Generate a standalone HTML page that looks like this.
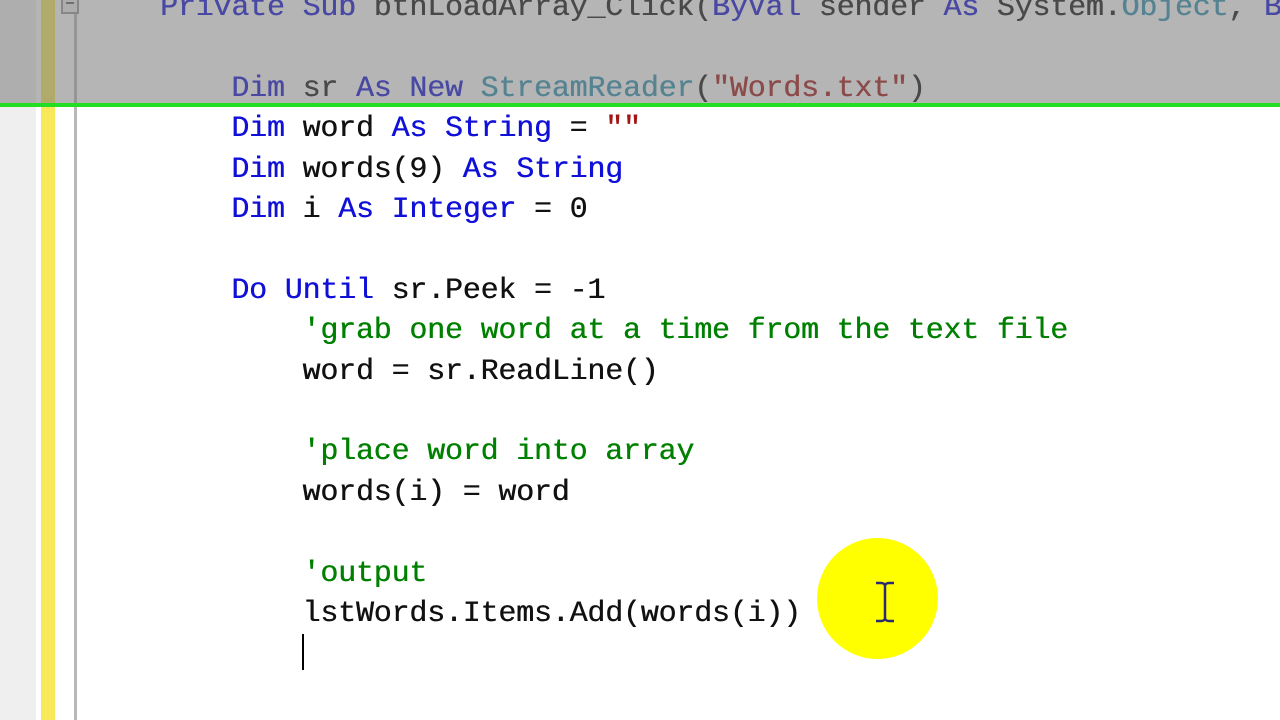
<!DOCTYPE html>
<html><head><style>
html,body{margin:0;padding:0;width:1280px;height:720px;overflow:hidden;background:#fff;position:relative;}
.m{position:absolute;left:0;top:0;width:36px;height:720px;background:#efefef;}
.y{position:absolute;left:41px;top:0;width:14px;height:720px;background:#f7e95a;}
.v{position:absolute;left:74px;top:0;width:3px;height:720px;background:#b8b8b8;}
.box{position:absolute;left:61px;top:-6px;width:18px;height:20px;border:2px solid #999;background:#eee;box-sizing:border-box;}
.box:after{content:"";position:absolute;left:3px;top:6px;width:8px;height:2px;background:#666;}
pre{position:absolute;left:160px;top:-12px;width:1120px;overflow:hidden;margin:0;font-family:"Liberation Mono",monospace;font-size:30px;line-height:40.4px;color:#111;letter-spacing:-0.2px;text-shadow:0.4px 0 0 currentColor;}
.k{color:#1010d8}.t{color:#2b91af}.s{color:#a31515}.c{color:#008000}
.ov{position:absolute;left:0;top:0;width:1280px;height:104px;background:rgba(120,120,120,0.55);}
.g{position:absolute;left:0;top:103px;width:1280px;height:4px;background:#22dd22;}
.cur{position:absolute;left:302px;top:634px;width:2px;height:36px;background:#000;}
.circ{position:absolute;left:817px;top:538px;width:121px;height:121px;border-radius:50%;background:#ffff00;}
</style></head><body>
<div class="m"></div><div class="y"></div><div class="v"></div><div class="box"></div>
<pre><span class="k">Private</span> <span class="k">Sub</span> btnLoadArray_Click(<span class="k">ByVal</span> sender <span class="k">As</span> System.<span class="t">Object</span>, <span class="k">ByVal</span>

    <span class="k">Dim</span> sr <span class="k">As</span> <span class="k">New</span> <span class="t">StreamReader</span>(<span class="s">"Words.txt"</span>)
    <span class="k">Dim</span> word <span class="k">As</span> <span class="k">String</span> = <span class="s">""</span>
    <span class="k">Dim</span> words(9) <span class="k">As</span> <span class="k">String</span>
    <span class="k">Dim</span> i <span class="k">As</span> <span class="k">Integer</span> = 0

    <span class="k">Do</span> <span class="k">Until</span> sr.Peek = -1
        <span class="c">'grab one word at a time from the text file</span>
        word = sr.ReadLine()

        <span class="c">'place word into array</span>
        words(i) = word

        <span class="c">'output</span>
        lstWords.Items.Add(words(i))
</pre>
<div class="ov"></div><div class="g"></div>
<div class="cur"></div>
<div class="circ"></div>
<svg style="position:absolute;left:872px;top:580px" width="26" height="44" viewBox="0 0 26 44"><path d="M4 3h5c2 0 4 1 4 3v32c0 2 2 3 4 3h5M22 3h-5c-2 0-4 1-4 3M13 38c0 2-2 3-4 3H4" fill="none" stroke="#2a2a70" stroke-width="2.5"/></svg>
</body></html>
